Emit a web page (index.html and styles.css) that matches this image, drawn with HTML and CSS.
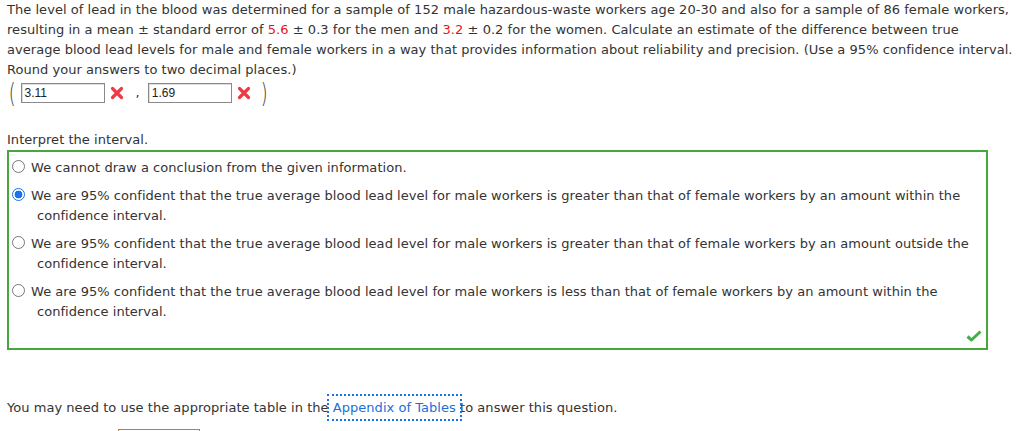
FILE: index.html
```html
<!DOCTYPE html>
<html>
<head>
<meta charset="utf-8">
<link rel="stylesheet" href="styles.css">
</head>
<body>
<div class="question">
  <p class="stem">The level of lead in the blood was determined for a sample of 152 male hazardous-waste workers age 20-30 and also for a sample of 86 female workers,<br>resulting in a mean ± standard error of <span class="val">5.6</span> ± 0.3 for the men and <span class="val">3.2</span> ± 0.2 for the women. Calculate an estimate of the difference between true<br>average blood lead levels for male and female workers in a way that provides information about reliability and precision. (Use a 95% confidence interval.<br>Round your answers to two decimal places.)</p>
  <div class="answer">
    <span class="paren">(</span>
    <span class="field">3.11</span>
    <svg class="wrong" viewBox="0 0 14 14" width="14" height="14"><path d="M2.5 2.5 L11.5 11.5 M11.5 2.5 L2.5 11.5" stroke="#ee3a44" stroke-width="3.2" stroke-linecap="round"/></svg>
    <span class="comma">,</span>
    <span class="field">1.69</span>
    <svg class="wrong" viewBox="0 0 14 14" width="14" height="14"><path d="M2.5 2.5 L11.5 11.5 M11.5 2.5 L2.5 11.5" stroke="#ee3a44" stroke-width="3.2" stroke-linecap="round"/></svg>
    <span class="paren close">)</span>
  </div>
  <p class="prompt">Interpret the interval.</p>
  <div class="choices">
    <label class="choice"><span class="radio"></span>We cannot draw a conclusion from the given information.</label>
    <label class="choice"><span class="radio on"></span>We are 95% confident that the true average blood lead level for male workers is greater than that of female workers by an amount within the confidence interval.</label>
    <label class="choice"><span class="radio"></span>We are 95% confident that the true average blood lead level for male workers is greater than that of female workers by an amount outside the confidence interval.</label>
    <label class="choice"><span class="radio"></span>We are 95% confident that the true average blood lead level for male workers is less than that of female workers by an amount within the confidence interval.</label>
    <div class="mark"><svg viewBox="0 0 16 12" width="16" height="12"><path d="M1.5 6.5 L5.5 10 L14.5 1.5" fill="none" stroke="#3fb04a" stroke-width="3" stroke-linejoin="round"/></svg></div>
  </div>
  <p class="note">You may need to use the appropriate table in the <a class="link" href="#">Appendix of Tables</a> to answer this question.</p>
  <div class="more"></div>
</div>
</body>
</html>
```
FILE: styles.css
```css
html, body { margin: 0; padding: 0; background: #fff; }
body {
  font-family: "DejaVu Sans", Verdana, sans-serif;
  font-size: 13px;
  line-height: 20px;
  letter-spacing: 0.04px;
  color: #333;
  padding: 0 7px;
  overflow: hidden;
}
p { margin: 0; }
.stem { width: 1014px; }
.val { color: #e8141e; }
.answer {
  display: flex;
  align-items: center;
  height: 26px;
  margin-top: 0;
}
.paren { font-size: 27px; font-weight: 100; color: #333; line-height: 26px; transform: scaleX(0.65); }
.field {
  width: 79px;
  height: 18px;
  border: 1px solid #8a8a8a;
  box-shadow: inset 1px 1px 0 #ddd;
  font-family: "Liberation Sans", Arial, sans-serif;
  font-size: 12px;
  letter-spacing: 0;
  line-height: 18px;
  padding-left: 3px;
  color: #222;
  margin-left: 3px;
}
.wrong { margin-left: 5px; }
.comma { margin: 0 5px 0 12px; }
.close { margin-left: 8px; }
.prompt { margin-top: 24px; }
.choices {
  border: 2px solid #46a83a;
  width: 981px;
  height: 200px;
  position: relative;
  padding-top: 6px;
  box-sizing: border-box;
}
.choice { display: block; margin-bottom: 8px; padding-left: 28px; text-indent: -25px; }
.radio {
  display: inline-block;
  vertical-align: -1px;
  width: 13px; height: 13px;
  border: 1px solid #777;
  border-radius: 50%;
  margin: 0 6px 0 0;
  box-sizing: border-box;
  background: #fff;
}
.radio.on { border-color: #1a73e8; background: radial-gradient(circle, #1a73e8 0 3.6px, #fff 4.2px); }
.mark { position: absolute; right: 4px; bottom: 6px; line-height: 0; }
.note { margin-top: 48px; }
.link { color: #1a6fd8; text-decoration: none; outline: 2px dotted #1a73e8; outline-offset: 4px; }
.more { width: 80px; height: 10px; border: 1px solid #c87f1a; margin: 11px 0 0 111px; }
```
